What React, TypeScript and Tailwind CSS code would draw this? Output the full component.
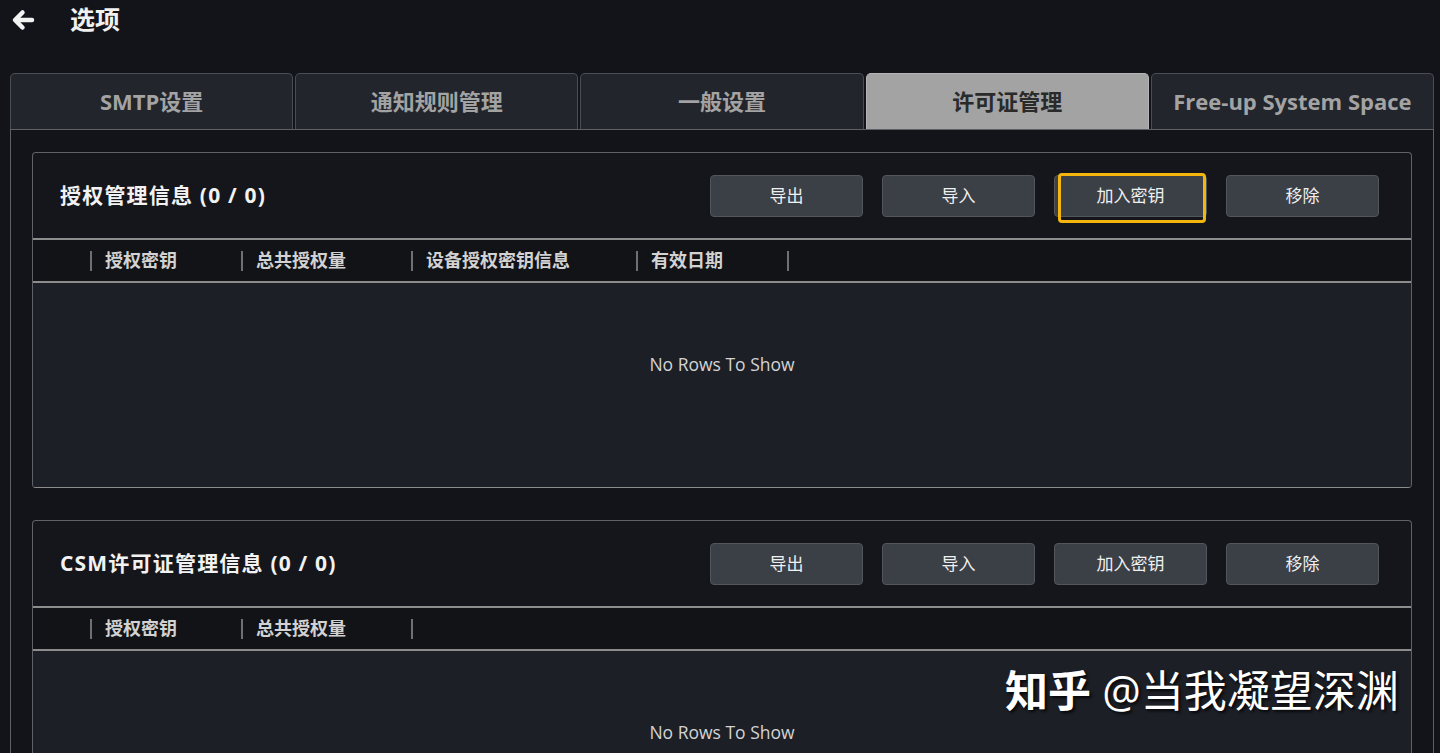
import { useState } from 'react';

const FONT = "font-['Open_Sans','Noto_Sans_CJK_SC',sans-serif]";

const tabs = ['SMTP设置', '通知规则管理', '一般设置', '许可证管理', 'Free-up System Space'];

type Column = { label: string; width: string };

const licenseColumns: Column[] = [
  { label: '授权密钥', width: 'w-[151px]' },
  { label: '总共授权量', width: 'w-[170px]' },
  { label: '设备授权密钥信息', width: 'w-[225px]' },
  { label: '有效日期', width: 'w-[151px]' },
];

const csmColumns: Column[] = [
  { label: '授权密钥', width: 'w-[151px]' },
  { label: '总共授权量', width: 'w-[170px]' },
];

const actions = ['导出', '导入', '加入密钥', '移除'];

function BackArrow() {
  return (
    <svg width="24" height="22" viewBox="0 0 24 22" fill="none">
      <path
        d="M21 11H5M11.5 3.5L4 11l7.5 7.5"
        stroke="#f2f2f2"
        strokeWidth="4.5"
        strokeLinecap="round"
        strokeLinejoin="round"
      />
    </svg>
  );
}

function Separator() {
  return <span className="block w-[2px] h-[20px] bg-[#6f7075] shrink-0" />;
}

function LicenseCard({
  title,
  columns,
  focused,
  bodyClass,
}: {
  title: string;
  columns: Column[];
  focused?: number;
  bodyClass: string;
}) {
  return (
    <div className="shrink-0 border border-[#5f6268] border-b-[#8c8c8c] rounded-[4px] bg-[#15161b] overflow-hidden">
      {/* header with actions */}
      <div className="h-[85px] flex items-center justify-between pl-[27px] pr-[32px]">
        <h2 className="text-[21px] font-bold text-[#f2f2f2] tracking-[1.2px]">{title}</h2>
        <div className="flex gap-[19px]">
          {actions.map((a, i) => (
            <div key={a} className="relative">
              <button className="w-[153px] h-[42px] rounded-[4px] bg-[#3b3f46] border border-[#51555c] text-[17px] text-[#f0f0f0]">
                {a}
              </button>
              {focused === i && (
                <span className="absolute left-[4px] right-[1px] top-[-2px] bottom-[-6px] border-[3px] border-[#f4b60c] rounded-[4px] pointer-events-none" />
              )}
            </div>
          ))}
        </div>
      </div>

      {/* column header */}
      <div className="h-[45px] border-t-2 border-b-2 border-[#8c8c8c] bg-[#121317] flex items-center">
        <div className="w-[57px] shrink-0" />
        {columns.map(c => (
          <div key={c.label} className={`${c.width} shrink-0 flex items-center`}>
            <Separator />
            <span className="ml-[13px] text-[18px] font-bold text-[#d2d2d2]">{c.label}</span>
          </div>
        ))}
        <Separator />
      </div>

      {/* body */}
      <div className={`bg-[#1d1f26] ${bodyClass} flex justify-center pt-[68px]`}>
        <span className="text-[17.5px] text-[#d4d4d4] h-fit">No Rows To Show</span>
      </div>
    </div>
  );
}

export default function App() {
  const [activeTab, setActiveTab] = useState(3);

  return (
    <div className={`${FONT} h-[753px] overflow-hidden bg-[#131419] relative`}>
      {/* Page header */}
      <div className="h-[42px] flex items-center pl-[11px] pb-[2px]">
        <BackArrow />
        <h1 className="ml-[35px] text-[25px] font-bold text-[#f0f0f0]">选项</h1>
      </div>

      {/* Tabs */}
      <div className="mt-[31px] ml-[10px] mr-[6px] flex gap-[2px]">
        {tabs.map((t, i) => (
          <button
            key={t}
            onClick={() => setActiveTab(i)}
            className={`flex-1 h-[56px] rounded-t-[5px] border border-b-0 text-[22px] font-bold ${
              i === activeTab
                ? 'bg-[#a3a3a3] border-[#b5b5b5] text-[#2a2a2a]'
                : 'bg-[#22252c] border-[#4a4d54] text-[#a3a3a3]'
            }`}
          >
            {t}
          </button>
        ))}
      </div>

      {/* Panel */}
      <div className="ml-[10px] mr-[6px] border-t border-l border-r border-[#5d6066] h-[700px] px-[21px] pt-[22px] flex flex-col gap-[32px]">
        <LicenseCard title="授权管理信息 (0 / 0)" columns={licenseColumns} focused={2} bodyClass="h-[204px]" />
        <LicenseCard title="CSM许可证管理信息 (0 / 0)" columns={csmColumns} bodyClass="h-[300px]" />
      </div>

      {/* watermark */}
      <div className="absolute left-[1005px] top-[669px] text-[43px] text-white leading-none whitespace-nowrap [text-shadow:2px_2px_3px_rgba(0,0,0,0.8)]">
        <span className="font-bold">知乎</span> @当我凝望深渊
      </div>
    </div>
  );
}
